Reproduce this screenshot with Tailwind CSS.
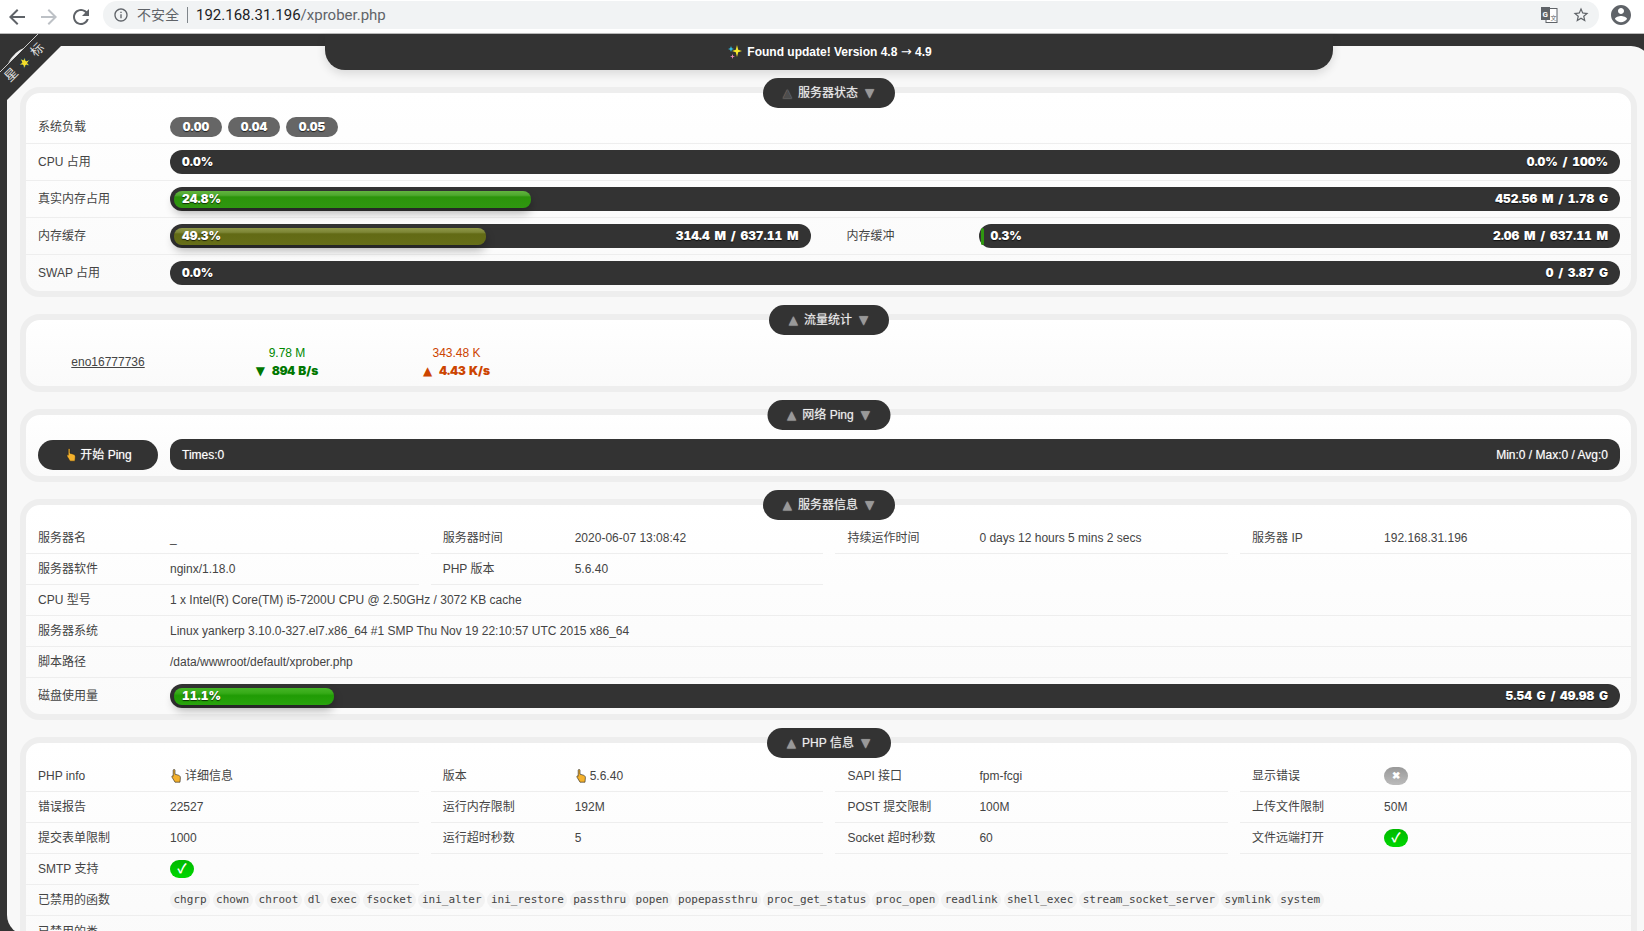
<!DOCTYPE html>
<html lang="zh">
<head>
<meta charset="utf-8">
<script src="https://cdn.jsdelivr.net/npm/@tailwindcss/browser@4"></script>
<title>X Prober</title>
</head>
<body class="w-[1644px] h-[931px] overflow-hidden bg-[#333] text-[12px] leading-[18px] text-[#444] font-['Liberation_Sans','Noto_Sans_CJK_SC',sans-serif]">

<header class="h-[34px] bg-white border-b border-[#bbb] flex items-center relative">
  <div class="w-[103px] flex items-center shrink-0 pl-[5px] gap-[8px] h-full">
    <svg class="w-6 h-6" viewBox="0 0 24 24" fill="#5f6368"><path d="M20 11H7.83l5.59-5.59L12 4l-8 8 8 8 1.41-1.41L7.83 13H20v-2z"/></svg>
    <svg class="w-6 h-6" viewBox="0 0 24 24" fill="#bdc1c6"><path d="M4 13h12.17l-5.59 5.59L12 20l8-8-8-8-1.41 1.41L16.17 11H4v2z"/></svg>
    <svg class="w-6 h-6" viewBox="0 0 24 24" fill="#5f6368"><path d="M17.65 6.35C16.2 4.9 14.21 4 12 4c-4.42 0-7.99 3.58-7.99 8s3.57 8 7.99 8c3.73 0 6.84-2.55 7.73-6h-2.08c-.82 2.33-3.04 4-5.65 4-3.31 0-6-2.69-6-6s2.69-6 6-6c1.66 0 3.14.69 4.22 1.78L13 11h7V4l-2.35 2.35z"/></svg>
  </div>
  <div class="w-[1496px] h-[28px] mt-[-4px] rounded-full bg-[#f1f3f4] flex items-center pl-[10px] pr-[9px] font-['Roboto','Noto_Sans_CJK_SC',sans-serif] text-[14px]">
    <svg class="w-4 h-4 shrink-0" viewBox="0 0 24 24" fill="#5f6368"><path d="M11 7h2v2h-2zm0 4h2v6h-2zm1-9C6.48 2 2 6.48 2 12s4.48 10 10 10 10-4.48 10-10S17.52 2 12 2zm0 18c-4.41 0-8-3.59-8-8s3.59-8 8-8 8 3.59 8 8-3.59 8-8 8z"/></svg>
    <span class="ml-[8px] text-[#5f6368]">不安全</span>
    <span class="ml-[8px] w-px h-[16px] bg-[#80868b]"></span>
    <span class="ml-[8px] text-[15px] text-[#202124]">192.168.31.196<span class="text-[#5f6368]">/xprober.php</span></span>
    <div class="ml-auto flex items-center gap-[14px]">
      <svg class="w-[18px] h-[18px]" viewBox="0 0 18 18"><rect x="6" y="2.5" width="11" height="14" fill="#fff" stroke="#5f6368"/><rect x="1" y="1" width="9" height="13" fill="#5f6368"/><text x="2.6" y="11" font-size="8" font-weight="bold" fill="#fff">G</text><text x="10.5" y="14" font-size="6" fill="#5f6368">文</text></svg>
      <svg class="w-[18px] h-[18px]" viewBox="0 0 24 24" fill="#5f6368"><path d="M22 9.24l-7.19-.62L12 2 9.19 8.63 2 9.24l5.46 4.73L5.82 21 12 17.27 18.18 21l-1.63-7.03L22 9.24zM12 15.4l-3.76 2.27 1-4.28-3.32-2.88 4.38-.38L12 6.1l1.71 4.04 4.38.38-3.32 2.88 1 4.28L12 15.4z"/></svg>
    </div>
  </div>
  <svg class="w-[24px] h-[24px] ml-[10px] mt-[-4px]" viewBox="0 0 24 24" fill="#5f6368"><path d="M12 2C6.48 2 2 6.48 2 12s4.48 10 10 10 10-4.48 10-10S17.52 2 12 2zm0 3c1.66 0 3 1.34 3 3s-1.34 3-3 3-3-1.34-3-3 1.34-3 3-3zm0 14.2c-2.5 0-4.71-1.28-6-3.22.03-1.99 4-3.08 6-3.08 1.99 0 5.97 1.09 6 3.08-1.29 1.94-3.5 3.22-6 3.22z"/></svg>
</header>

<!-- star ribbon -->
<div class="absolute left-0 top-[34px] w-[70px] h-[80px] z-20 pointer-events-none">
  <svg class="absolute inset-0" width="70" height="80" viewBox="0 0 70 80">
    <polygon points="0,0 61,0 61,12 7,66 0,66" fill="#333"/>
    <line x1="38" y1="0" x2="0" y2="38" stroke="#ccc" stroke-width="1"/>
    <path d="M8 29 Q15 17 24 14 Q17 22 8 29Z" fill="#eee"/>
    <polygon points="24.5,24 26,28 30,26.5 27.5,30 30,33 26,32 24,36 23,32 19,32 22,29.5 20,25.5 23.5,27" fill="#f3dd2a" stroke="#17324d" stroke-width="0.8" transform="translate(0,-1)"/>
  </svg>
  <span class="absolute left-[5px] top-[34px] -rotate-45 text-[#ddd] text-[13px] leading-[14px]">星</span>
  <span class="absolute left-[31px] top-[9px] -rotate-45 text-[#ddd] text-[13px] leading-[14px]">标</span>
</div>

<main class="ml-[7px] mt-[12px] w-[1644px] h-[889px] rounded-[20px] bg-[#f8f8f8] pl-[13px] pr-[14px] relative">
  <div class="absolute left-[318px] top-[-12px] w-[1008px] h-[36px] rounded-b-[20px] bg-[#333] shadow-[0_4px_10px_rgba(0,0,0,0.12)] flex items-center justify-center text-white font-bold gap-[5px] pl-[2px]">
    <svg width="14" height="14" viewBox="0 0 14 14"><path d="M9 0 L10.2 4.8 L14 6 L10.2 7.2 L9 12 L7.8 7.2 L4 6 L7.8 4.8Z" fill="#f7e82a"/><path d="M3 1 L3.8 3.2 L6 4 L3.8 4.8 L3 7 L2.2 4.8 L0 4 L2.2 3.2Z" fill="#32c4e8"/><path d="M4.5 9 L5.1 10.9 L7 11.5 L5.1 12.1 L4.5 14 L3.9 12.1 L2 11.5 L3.9 10.9Z" fill="#f08ab8"/></svg>
    <span>Found update! Version 4.8 <span class="font-['DejaVu_Sans',sans-serif] font-normal text-[13px] leading-none">→</span> 4.9</span>
  </div>
  <div class="h-[41px]"></div>

  <!-- 服务器状态 -->
  <section class="relative border-[6px] border-[#eee] rounded-[20px] bg-linear-to-b from-white to-[#fafafa] pt-[18px] mb-[17px]">
    <h2 class="absolute left-1/2 -translate-x-1/2 top-[-15px] h-[30px] w-[132px] rounded-[15px] bg-[#333] text-[#eee] flex items-center justify-center gap-[6px] [text-shadow:0_0_1px_rgba(255,255,255,0.5)]"><span class="text-[#4d4d4d] font-['DejaVu_Sans',sans-serif]">▲</span>服务器状态<span class="ml-[1px] text-[#999] font-['DejaVu_Sans',sans-serif]">▼</span></h2>
    <div class="flex items-center h-[33px] border-b border-[#eee] pl-[12px] pr-[11px]">
      <span class="w-[132px] shrink-0">系统负载</span>
      <div class="flex gap-[6px]">
        <span class="w-[52px] h-[20px] rounded-[10px] bg-[#666] text-center leading-[20px] text-white font-['Inter',sans-serif] font-black tabular-nums [text-shadow:0_1px_1px_rgba(0,0,0,0.7)]">0.00</span>
        <span class="w-[52px] h-[20px] rounded-[10px] bg-[#666] text-center leading-[20px] text-white font-['Inter',sans-serif] font-black tabular-nums [text-shadow:0_1px_1px_rgba(0,0,0,0.7)]">0.04</span>
        <span class="w-[52px] h-[20px] rounded-[10px] bg-[#666] text-center leading-[20px] text-white font-['Inter',sans-serif] font-black tabular-nums [text-shadow:0_1px_1px_rgba(0,0,0,0.7)]">0.05</span>
      </div>
    </div>
    <div class="flex items-center h-[37px] border-b border-[#eee] pl-[12px] pr-[11px]">
      <span class="w-[132px] shrink-0">CPU 占用</span>
      <div class="relative grow h-6 rounded-xl bg-[#333] flex items-center justify-between px-3 text-white font-['Inter',sans-serif] font-black tabular-nums [word-spacing:1.5px] [text-shadow:0_1px_1px_rgba(0,0,0,0.7)]"><span>0.0%</span><span>0.0% / 100%</span></div>
    </div>
    <div class="flex items-center h-[37px] border-b border-[#eee] pl-[12px] pr-[11px]">
      <span class="w-[132px] shrink-0">真实内存占用</span>
      <div class="relative grow h-6 rounded-xl bg-[#333] flex items-center justify-between px-3 text-white font-['Inter',sans-serif] font-black tabular-nums [word-spacing:1.5px] [text-shadow:0_1px_1px_rgba(0,0,0,0.7)]">
        <div class="absolute left-1 top-1 h-[17px] w-[357px] rounded-lg bg-[linear-gradient(to_bottom,#62b33f_0%,#4ea82e_25%,#2c930b_35%,#2f9710_100%)] shadow-[0_5px_10px_rgba(0,0,0,0.3)]"></div>
        <span class="relative">24.8%</span><span class="relative">452.56 M / 1.78 G</span>
      </div>
    </div>
    <div class="grid grid-cols-2 gap-x-3 h-[37px] border-b border-[#eee]">
      <div class="flex items-center pl-[12px] pr-[12px]">
        <span class="w-[132px] shrink-0">内存缓存</span>
        <div class="relative grow h-6 rounded-xl bg-[#333] flex items-center justify-between px-3 text-white font-['Inter',sans-serif] font-black tabular-nums [word-spacing:1.5px] [text-shadow:0_1px_1px_rgba(0,0,0,0.7)]">
          <div class="absolute left-1 top-1 h-[17px] w-[312px] rounded-lg bg-[linear-gradient(to_bottom,#8f9848_0%,#7d8636_25%,#626a15_35%,#666e18_100%)] shadow-[0_5px_10px_rgba(0,0,0,0.3)]"></div>
          <span class="relative">49.3%</span><span class="relative">314.4 M / 637.11 M</span>
        </div>
      </div>
      <div class="flex items-center pl-[12px] pr-[11px]">
        <span class="w-[132px] shrink-0">内存缓冲</span>
        <div class="relative grow h-6 rounded-xl bg-[#333] flex items-center justify-between px-3 text-white font-['Inter',sans-serif] font-black tabular-nums [word-spacing:1.5px] [text-shadow:0_1px_1px_rgba(0,0,0,0.7)]">
          <div class="absolute left-[2px] top-1 h-[17px] w-[3px] rounded-sm bg-[#2f9710]"></div>
          <span class="relative">0.3%</span><span class="relative">2.06 M / 637.11 M</span>
        </div>
      </div>
    </div>
    <div class="flex items-center h-[36px] pl-[12px] pr-[11px]">
      <span class="w-[132px] shrink-0">SWAP 占用</span>
      <div class="relative grow h-6 rounded-xl bg-[#333] flex items-center justify-between px-3 text-white font-['Inter',sans-serif] font-black tabular-nums [word-spacing:1.5px] [text-shadow:0_1px_1px_rgba(0,0,0,0.7)]"><span>0.0%</span><span>0 / 3.87 G</span></div>
    </div>
  </section>

  <!-- 流量统计 -->
  <section class="relative border-[6px] border-[#eee] rounded-[20px] bg-linear-to-b from-white to-[#fafafa] pt-[18px] mb-[17px]">
    <h2 class="absolute left-1/2 -translate-x-1/2 top-[-15px] h-[30px] w-[120px] rounded-[15px] bg-[#333] text-[#eee] flex items-center justify-center gap-[6px] [text-shadow:0_0_1px_rgba(255,255,255,0.5)]"><span class="text-[#999] font-['DejaVu_Sans',sans-serif]">▲</span>流量统计<span class="ml-[1px] text-[#999] font-['DejaVu_Sans',sans-serif]">▼</span></h2>
    <div class="flex h-[48px] items-center text-center">
      <a class="w-[164px] underline">eno16777736</a>
      <div class="w-[194px] text-[#080]"><div>9.78 M</div><div class="flex items-center justify-center gap-[7px] text-[#070] font-['Inter',sans-serif] font-black tabular-nums"><span class="font-['DejaVu_Sans',sans-serif] font-normal">▼</span>894 B/s</div></div>
      <div class="w-[145px] text-[#c40]"><div>343.48 K</div><div class="flex items-center justify-center gap-[7px] font-['Inter',sans-serif] font-black tabular-nums"><span class="font-['DejaVu_Sans',sans-serif] font-normal">▲</span>4.43 K/s</div></div>
    </div>
  </section>

  <!-- 网络 Ping -->
  <section class="relative border-[6px] border-[#eee] rounded-[20px] bg-linear-to-b from-white to-[#fafafa] pt-[18px] pb-[6px] pl-[12px] pr-[11px] mb-[17px]">
    <h2 class="absolute left-1/2 -translate-x-1/2 top-[-15px] h-[30px] w-[123px] rounded-[15px] bg-[#333] text-[#eee] flex items-center justify-center gap-[6px] [text-shadow:0_0_1px_rgba(255,255,255,0.5)]"><span class="text-[#999] font-['DejaVu_Sans',sans-serif]">▲</span>网络 Ping<span class="ml-[1px] text-[#999] font-['DejaVu_Sans',sans-serif]">▼</span></h2>
    <div class="flex items-end h-[37px]">
      <button class="w-[120px] h-[30px] rounded-[15px] bg-[#333] text-white flex items-center justify-center gap-[4px] pl-[2px] [text-shadow:0_0_1px_rgba(255,255,255,0.5)]">
        <svg width="10" height="14" viewBox="0 0 10 14"><path d="M2.2 1.2C2.2 .2 4 .2 4 1.2L4 5.2L7.5 6.2C8.8 6.6 9.4 7.6 9.4 8.8L9 13.2L4 13.2L1 8.2C.5 7.2 1.5 6.4 2.2 7.2Z" fill="#f4b12c" stroke="#222" stroke-width=".6"/></svg>
        开始 Ping
      </button>
      <div class="ml-[12px] grow h-[31px] rounded-xl bg-[#333] text-white flex items-center justify-between px-3 [text-shadow:0_0_1px_rgba(255,255,255,0.5)]"><span>Times:0</span><span>Min:0 / Max:0 / Avg:0</span></div>
    </div>
  </section>

  <!-- 服务器信息 -->
  <section class="relative border-[6px] border-[#eee] rounded-[20px] bg-linear-to-b from-white to-[#fafafa] pt-[18px] mb-[17px]">
    <h2 class="absolute left-1/2 -translate-x-1/2 top-[-15px] h-[30px] w-[132px] rounded-[15px] bg-[#333] text-[#eee] flex items-center justify-center gap-[6px] [text-shadow:0_0_1px_rgba(255,255,255,0.5)]"><span class="text-[#999] font-['DejaVu_Sans',sans-serif]">▲</span>服务器信息<span class="ml-[1px] text-[#999] font-['DejaVu_Sans',sans-serif]">▼</span></h2>
    <div class="grid grid-cols-[392.7px_392.7px_392.7px_1fr] gap-x-3 auto-rows-[31px]">
      <div class="flex items-center border-b border-[#eee] pl-[12px]"><span class="w-[132px] shrink-0">服务器名</span><span>_</span></div>
      <div class="flex items-center border-b border-[#eee] pl-[12px]"><span class="w-[132px] shrink-0">服务器时间</span><span>2020-06-07 13:08:42</span></div>
      <div class="flex items-center border-b border-[#eee] pl-[12px]"><span class="w-[132px] shrink-0">持续运作时间</span><span>0 days 12 hours 5 mins 2 secs</span></div>
      <div class="flex items-center border-b border-[#eee] pl-[12px]"><span class="w-[132px] shrink-0">服务器 IP</span><span>192.168.31.196</span></div>
      <div class="flex items-center border-b border-[#eee] pl-[12px]"><span class="w-[132px] shrink-0">服务器软件</span><span>nginx/1.18.0</span></div>
      <div class="flex items-center border-b border-[#eee] pl-[12px]"><span class="w-[132px] shrink-0">PHP 版本</span><span>5.6.40</span></div>
      <div class="flex items-center border-b border-[#eee] pl-[12px] col-span-4 col-start-1"><span class="w-[132px] shrink-0">CPU 型号</span><span>1 x Intel(R) Core(TM) i5-7200U CPU @ 2.50GHz / 3072 KB cache</span></div>
      <div class="flex items-center border-b border-[#eee] pl-[12px] col-span-4"><span class="w-[132px] shrink-0">服务器系统</span><span>Linux yankerp 3.10.0-327.el7.x86_64 #1 SMP Thu Nov 19 22:10:57 UTC 2015 x86_64</span></div>
      <div class="flex items-center border-b border-[#eee] pl-[12px] col-span-4"><span class="w-[132px] shrink-0">脚本路径</span><span>/data/wwwroot/default/xprober.php</span></div>
    </div>
    <div class="flex items-center h-[36px] pl-[12px] pr-[11px]">
      <span class="w-[132px] shrink-0">磁盘使用量</span>
      <div class="relative grow h-6 rounded-xl bg-[#333] flex items-center justify-between px-3 text-white font-['Inter',sans-serif] font-black tabular-nums [word-spacing:1.5px] [text-shadow:0_1px_1px_rgba(0,0,0,0.7)]">
        <div class="absolute left-1 top-1 h-[17px] w-[160px] rounded-lg bg-[linear-gradient(to_bottom,#45b526_0%,#36ab18_30%,#209c05_45%,#28a30c_100%)] shadow-[0_5px_10px_rgba(0,0,0,0.3)]"></div>
        <span class="relative">11.1%</span><span class="relative">5.54 G / 49.98 G</span>
      </div>
    </div>
  </section>

  <!-- PHP 信息 -->
  <section class="relative border-[6px] border-[#eee] rounded-[20px] bg-linear-to-b from-white to-[#fafafa] pt-[18px] mb-[17px]">
    <h2 class="absolute left-1/2 -translate-x-1/2 top-[-15px] h-[30px] w-[124px] rounded-[15px] bg-[#333] text-[#eee] flex items-center justify-center gap-[6px] [text-shadow:0_0_1px_rgba(255,255,255,0.5)]"><span class="text-[#999] font-['DejaVu_Sans',sans-serif]">▲</span>PHP 信息<span class="ml-[1px] text-[#999] font-['DejaVu_Sans',sans-serif]">▼</span></h2>
    <div class="grid grid-cols-[392.7px_392.7px_392.7px_1fr] gap-x-3 auto-rows-[31px]">
      <div class="flex items-center border-b border-[#eee] pl-[12px]"><span class="w-[132px] shrink-0">PHP info</span>
        <svg class="ml-[1px] mr-[4px]" width="10" height="14" viewBox="0 0 10 14"><path d="M2.2 1.2C2.2 .2 4 .2 4 1.2L4 5.2L7.5 6.2C8.8 6.6 9.4 7.6 9.4 8.8L9 13.2L4 13.2L1 8.2C.5 7.2 1.5 6.4 2.2 7.2Z" fill="#f4b12c" stroke="#222" stroke-width=".6"/></svg>
        <span>详细信息</span></div>
      <div class="flex items-center border-b border-[#eee] pl-[12px]"><span class="w-[132px] shrink-0">版本</span>
        <svg class="ml-[1px] mr-[4px]" width="10" height="14" viewBox="0 0 10 14"><path d="M2.2 1.2C2.2 .2 4 .2 4 1.2L4 5.2L7.5 6.2C8.8 6.6 9.4 7.6 9.4 8.8L9 13.2L4 13.2L1 8.2C.5 7.2 1.5 6.4 2.2 7.2Z" fill="#f4b12c" stroke="#222" stroke-width=".6"/></svg>
        <span>5.6.40</span></div>
      <div class="flex items-center border-b border-[#eee] pl-[12px]"><span class="w-[132px] shrink-0">SAPI 接口</span><span>fpm-fcgi</span></div>
      <div class="flex items-center border-b border-[#eee] pl-[12px]"><span class="w-[132px] shrink-0">显示错误</span><span class="w-6 h-[18px] rounded-[9px] bg-linear-to-b from-[#999] to-[#bbb] text-white text-[10px] font-bold flex items-center justify-center">✖</span></div>
      <div class="flex items-center border-b border-[#eee] pl-[12px]"><span class="w-[132px] shrink-0">错误报告</span><span>22527</span></div>
      <div class="flex items-center border-b border-[#eee] pl-[12px]"><span class="w-[132px] shrink-0">运行内存限制</span><span>192M</span></div>
      <div class="flex items-center border-b border-[#eee] pl-[12px]"><span class="w-[132px] shrink-0">POST 提交限制</span><span>100M</span></div>
      <div class="flex items-center border-b border-[#eee] pl-[12px]"><span class="w-[132px] shrink-0">上传文件限制</span><span>50M</span></div>
      <div class="flex items-center border-b border-[#eee] pl-[12px]"><span class="w-[132px] shrink-0">提交表单限制</span><span>1000</span></div>
      <div class="flex items-center border-b border-[#eee] pl-[12px]"><span class="w-[132px] shrink-0">运行超时秒数</span><span>5</span></div>
      <div class="flex items-center border-b border-[#eee] pl-[12px]"><span class="w-[132px] shrink-0">Socket 超时秒数</span><span>60</span></div>
      <div class="flex items-center border-b border-[#eee] pl-[12px]"><span class="w-[132px] shrink-0">文件远端打开</span><span class="w-6 h-[18px] rounded-[9px] bg-linear-to-b from-[#00b800] to-[#00d800] text-white text-[13px] font-bold flex items-center justify-center">✓</span></div>
      <div class="flex items-center border-b border-[#eee] pl-[12px] col-start-1 col-end-2"><span class="w-[132px] shrink-0">SMTP 支持</span><span class="w-6 h-[18px] rounded-[9px] bg-linear-to-b from-[#00b800] to-[#00d800] text-white text-[13px] font-bold flex items-center justify-center">✓</span></div>
      <div class="flex items-center border-b border-[#eee] pl-[12px] col-span-4"><span class="w-[132px] shrink-0">已禁用的函数</span>
        <div class="flex gap-[2.4px] font-['DejaVu_Sans_Mono',monospace] text-[11px] text-[#444]">
          <span class="h-[18px] px-[3.5px] rounded-[9px] bg-[#f2f2f2]">chgrp</span>
          <span class="h-[18px] px-[3.5px] rounded-[9px] bg-[#f2f2f2]">chown</span>
          <span class="h-[18px] px-[3.5px] rounded-[9px] bg-[#f2f2f2]">chroot</span>
          <span class="h-[18px] px-[3.5px] rounded-[9px] bg-[#f2f2f2]">dl</span>
          <span class="h-[18px] px-[3.5px] rounded-[9px] bg-[#f2f2f2]">exec</span>
          <span class="h-[18px] px-[3.5px] rounded-[9px] bg-[#f2f2f2]">fsocket</span>
          <span class="h-[18px] px-[3.5px] rounded-[9px] bg-[#f2f2f2]">ini_alter</span>
          <span class="h-[18px] px-[3.5px] rounded-[9px] bg-[#f2f2f2]">ini_restore</span>
          <span class="h-[18px] px-[3.5px] rounded-[9px] bg-[#f2f2f2]">passthru</span>
          <span class="h-[18px] px-[3.5px] rounded-[9px] bg-[#f2f2f2]">popen</span>
          <span class="h-[18px] px-[3.5px] rounded-[9px] bg-[#f2f2f2]">popepassthru</span>
          <span class="h-[18px] px-[3.5px] rounded-[9px] bg-[#f2f2f2]">proc_get_status</span>
          <span class="h-[18px] px-[3.5px] rounded-[9px] bg-[#f2f2f2]">proc_open</span>
          <span class="h-[18px] px-[3.5px] rounded-[9px] bg-[#f2f2f2]">readlink</span>
          <span class="h-[18px] px-[3.5px] rounded-[9px] bg-[#f2f2f2]">shell_exec</span>
          <span class="h-[18px] px-[3.5px] rounded-[9px] bg-[#f2f2f2]">stream_socket_server</span>
          <span class="h-[18px] px-[3.5px] rounded-[9px] bg-[#f2f2f2]">symlink</span>
          <span class="h-[18px] px-[3.5px] rounded-[9px] bg-[#f2f2f2]">system</span>
        </div>
      </div>
      <div class="flex items-center pl-[12px] col-span-4"><span class="w-[132px] shrink-0">已禁用的类</span></div>
    </div>
  </section>
</main>
</body>
</html>
